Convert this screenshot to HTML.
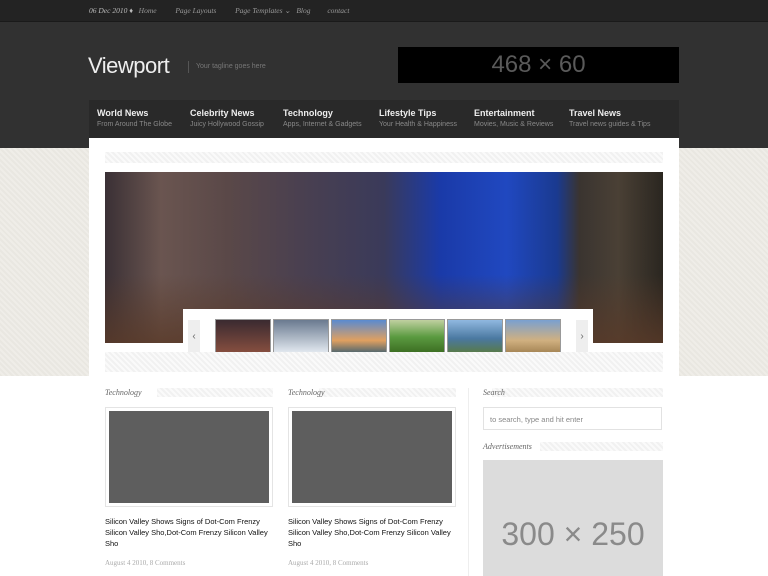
<!DOCTYPE html><html><head><style>
*{margin:0;padding:0;box-sizing:border-box}
body{width:768px;height:576px;overflow:hidden;background:#fff;font-family:"Liberation Sans",sans-serif;position:relative}
.a{position:absolute}
.ser{font-family:"Liberation Serif",serif;font-style:italic}
.stripe{background:repeating-linear-gradient(45deg,#f1f1f1 0 2px,#fafafa 2px 4px)}
.nav div{position:absolute;top:8px}
.nav b{display:block;color:#eee;font-size:9px}
.nav span{display:block;color:#888;font-size:7px;margin-top:3px}
.th{position:absolute;top:10px;width:56px;height:36px;border:1px solid #999}
</style></head><body>
<div class="a" style="left:0;top:0;width:768px;height:22px;background:#232323;border-bottom:1px solid #1a1a1a"></div>
<div class="a ser" style="left:89px;top:6px;font-size:7.5px;color:#999;white-space:nowrap"><span style="color:#bbb">06 Dec 2010 ♦</span>&nbsp;&nbsp; Home&nbsp;&nbsp;&nbsp;&nbsp;&nbsp;&nbsp;&nbsp;&nbsp;&nbsp; Page Layouts&nbsp;&nbsp;&nbsp;&nbsp;&nbsp;&nbsp;&nbsp;&nbsp;&nbsp; Page Templates ⌄&nbsp;&nbsp; Blog&nbsp;&nbsp;&nbsp;&nbsp;&nbsp;&nbsp;&nbsp;&nbsp; contact</div>
<div class="a" style="left:0;top:22px;width:768px;height:126px;background:#313131"></div>
<div class="a" style="left:0;top:148px;width:768px;height:228px;background:repeating-linear-gradient(45deg,#e9e7e1 0 2px,#efede8 2px 4px)"></div>
<div class="a" style="left:88px;top:53px;font-size:22px;color:#eee;letter-spacing:-0.5px">Viewport</div>
<div class="a" style="left:188px;top:61px;height:12px;border-left:1px solid #555"></div>
<div class="a" style="left:196px;top:63px;font-size:7px;color:#777">Your tagline goes here</div>
<div class="a" style="left:398px;top:47px;width:281px;height:36px;background:#000;color:#5a5a5a;font-size:24px;text-align:center;line-height:36px">468 × 60</div>
<div class="a nav" style="left:89px;top:100px;width:590px;height:38px;background:#292929">
<div style="left:8px"><b>World News</b><span>From Around The Globe</span></div>
<div style="left:101px"><b>Celebrity News</b><span>Juicy Hollywood Gossip</span></div>
<div style="left:194px"><b>Technology</b><span>Apps, Internet &amp; Gadgets</span></div>
<div style="left:290px"><b>Lifestyle Tips</b><span>Your Health &amp; Happiness</span></div>
<div style="left:385px"><b>Entertainment</b><span>Movies, Music &amp; Reviews</span></div>
<div style="left:480px"><b>Travel News</b><span>Travel news guides &amp; Tips</span></div>
</div>
<div class="a" style="left:89px;top:138px;width:590px;height:438px;background:#fff"></div>
<div class="a stripe" style="left:105px;top:152px;width:558px;height:11px"></div>
<div class="a" style="left:105px;top:172px;width:558px;height:171px;background:linear-gradient(90deg,#3a3035 0,#6a5550 10%,#5a4848 22%,#4a4050 35%,#3a3a5a 50%,#1a3aa8 60%,#2048c0 72%,#1a3a90 81%,#3a3430 85%,#4a4035 92%,#2a2620 100%)"></div>
<div class="a" style="left:105px;top:172px;width:558px;height:171px;background:linear-gradient(0deg,rgba(90,58,40,.8),rgba(80,60,50,0) 40%)"></div>
<div class="a" style="left:183px;top:309px;width:410px;height:57px;background:#fff"></div>
<div class="a" style="left:188px;top:320px;width:12px;height:34px;background:#eee;color:#666;font-size:10px;text-align:center;line-height:34px">‹</div>
<div class="a" style="left:576px;top:320px;width:12px;height:34px;background:#eee;color:#666;font-size:10px;text-align:center;line-height:34px">›</div>
<div class="a" style="left:0;top:309px">
<div class="th" style="left:215px;background:linear-gradient(#3a2a30,#8a5040)"></div>
<div class="th" style="left:273px;background:linear-gradient(#6a7a90,#e8eef4)"></div>
<div class="th" style="left:331px;background:linear-gradient(#5a8ad0,#e0a060 60%,#406070)"></div>
<div class="th" style="left:389px;background:linear-gradient(#c0d0a0,#5a9a40 50%,#3a6a20)"></div>
<div class="th" style="left:447px;background:linear-gradient(#90b8e0,#4a78a0 55%,#5a7a40)"></div>
<div class="th" style="left:505px;background:linear-gradient(#7aa0d0,#d0b080 60%,#a08050)"></div>
</div>
<div class="a stripe" style="left:105px;top:352px;width:558px;height:20px"></div>
<div class="a stripe" style="left:157px;top:388px;width:116px;height:9px"></div>
<div class="a stripe" style="left:319px;top:388px;width:137px;height:9px"></div>
<div class="a stripe" style="left:492px;top:388px;width:171px;height:9px"></div>
<div class="a stripe" style="left:540px;top:442px;width:123px;height:9px"></div>
<div class="a ser" style="left:105px;top:388px;font-size:8px;color:#666">Technology</div>
<div class="a ser" style="left:288px;top:388px;font-size:8px;color:#666">Technology</div>
<div class="a" style="left:468px;top:388px;height:188px;border-left:1px solid #eee"></div>
<div class="a ser" style="left:483px;top:388px;font-size:8px;color:#666">Search</div>
<div class="a" style="left:105px;top:407px;width:168px;height:100px;border:1px solid #e4e4e4;padding:3px"><div style="width:100%;height:100%;background:#5e5e5e"></div></div>
<div class="a" style="left:288px;top:407px;width:168px;height:100px;border:1px solid #e4e4e4;padding:3px"><div style="width:100%;height:100%;background:#5e5e5e"></div></div>
<div class="a" style="left:105px;top:516px;width:172px;font-size:7.5px;line-height:11px;color:#111">Silicon Valley Shows Signs of Dot-Com Frenzy Silicon Valley Sho,Dot-Com Frenzy Silicon Valley Sho</div>
<div class="a" style="left:288px;top:516px;width:172px;font-size:7.5px;line-height:11px;color:#111">Silicon Valley Shows Signs of Dot-Com Frenzy Silicon Valley Sho,Dot-Com Frenzy Silicon Valley Sho</div>
<div class="a" style="left:105px;top:559px;font-family:'Liberation Serif',serif;font-size:7px;color:#aaa">August 4 2010, 8 Comments</div>
<div class="a" style="left:288px;top:559px;font-family:'Liberation Serif',serif;font-size:7px;color:#aaa">August 4 2010, 8 Comments</div>
<div class="a" style="left:483px;top:407px;width:179px;height:23px;border:1px solid #e2e2e2;font-size:7.5px;color:#888;padding:7px 0 0 6px">to search, type and hit enter</div>
<div class="a ser" style="left:483px;top:442px;font-size:8px;color:#666">Advertisements</div>
<div class="a" style="left:483px;top:460px;width:180px;height:116px;background:#dcdcdc;color:#8a8a8a;font-size:32px;text-align:center;padding-top:56px">300 × 250</div>
</body></html>
